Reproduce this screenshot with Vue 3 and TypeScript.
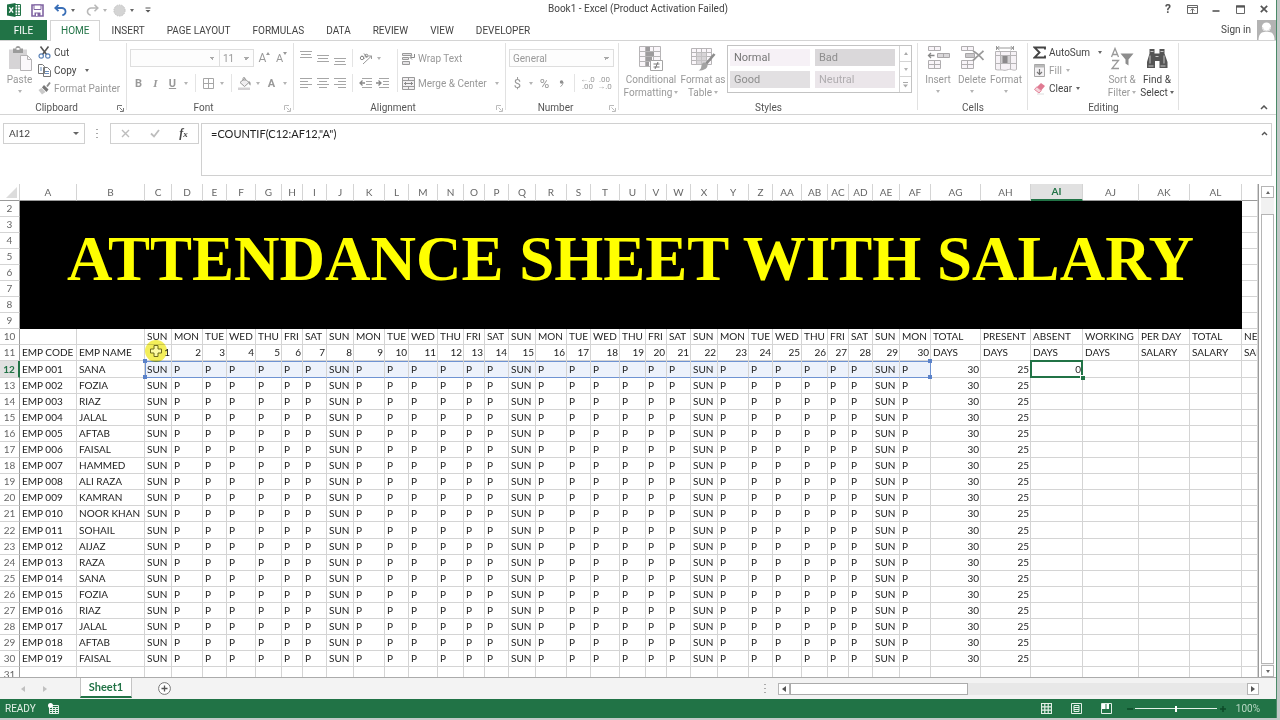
<script setup lang="ts">
import { ref } from 'vue'

interface Column { name: string; width: number; day: string; label: string }

const weekDays: string[] = ['SUN', 'MON', 'TUE', 'WED', 'THU', 'FRI', 'SAT']
const weekWidths: number[] = [27, 31, 24, 29, 26, 21, 24]

const columnName = (index: number): string =>
  index < 26 ? String.fromCharCode(65 + index) : 'A' + String.fromCharCode(65 + index - 26)

const dayColumns: Column[] = Array.from({ length: 30 }, (_, i) => ({
  name: columnName(i + 2),
  width: weekWidths[i % 7],
  day: weekDays[i % 7],
  label: String(i + 1),
}))

const totals: Column[] = [
  { name: 'AG', width: 50, day: 'TOTAL', label: 'DAYS' },
  { name: 'AH', width: 50, day: 'PRESENT', label: 'DAYS' },
  { name: 'AI', width: 52, day: 'ABSENT', label: 'DAYS' },
  { name: 'AJ', width: 56, day: 'WORKING', label: 'DAYS' },
  { name: 'AK', width: 51, day: 'PER DAY', label: 'SALARY' },
  { name: 'AL', width: 52, day: 'TOTAL', label: 'SALARY' },
]

const columns: Column[] = [
  { name: 'A', width: 57, day: '', label: 'EMP CODE' },
  { name: 'B', width: 68, day: '', label: 'EMP NAME' },
  ...dayColumns,
  ...totals,
]

const names: string[] = [
  'SANA', 'FOZIA', 'RIAZ', 'JALAL', 'AFTAB', 'FAISAL', 'HAMMED', 'ALI RAZA', 'KAMRAN', 'NOOR KHAN',
  'SOHAIL', 'AIJAZ', 'RAZA', 'SANA', 'FOZIA', 'RIAZ', 'JALAL', 'AFTAB', 'FAISAL',
]

const employees = names.map((name, i) => ({
  row: i + 12,
  code: 'EMP ' + String(i + 1).padStart(3, '0'),
  name,
}))

const tabs: string[] = ['HOME', 'INSERT', 'PAGE LAYOUT', 'FORMULAS', 'DATA', 'REVIEW', 'VIEW', 'DEVELOPER']
const activeTab = ref('HOME')
const cellName = ref('AI12')
const formula = ref('=COUNTIF(C12:AF12,"A")')
const zoom = ref(50)
</script>

<template>
  <div class="desktop">
    <div class="window">
      <header class="titlebar">
        <div class="qat">
          <svg class="logo" width="14" height="14" viewBox="0 0 14 14"><path d="M7 1.5h6.5v11H7z" fill="#fff" stroke="#217346" /><path d="M8 4h5M8 7h5M8 10h5M10.5 2v10" stroke="#217346" stroke-width=".8" /><path d="M0 1.5 8.500 0v14L0 12.500z" fill="#1e7145" /><path d="m2.300 4.300 3.800 5.400M6.100 4.300 2.300 9.700" stroke="#fff" stroke-width="1.400" /></svg>
          <button aria-label="Save"><svg width="13" height="13" viewBox="0 0 13 13"><path d="M1 1h11v11H1z" fill="#fff" stroke="#8064a2" stroke-width="1.600" /><path d="M3 1h7v4.500H3z" fill="#fff" stroke="#8064a2" /><path d="M3.500 8.500h6V12h-6z" fill="#8064a2" /><path d="M5 9.500h1.500V12H5z" fill="#fff" /></svg></button>
          <button aria-label="Undo"><svg width="13" height="12" viewBox="0 0 13 12"><path d="M4.500.8 1.200 4l3.300 3.200M1.500 4h6a3.600 3.600 0 0 1 .8 7.200" fill="none" stroke="#3a6fb7" stroke-width="1.800" /></svg></button>
          <button class="dd" aria-label="Undo list"><i class="caret dark"></i></button>
          <button aria-label="Redo"><svg width="13" height="12" viewBox="0 0 13 12"><path d="m8.500.8 3.300 3.200-3.300 3.200M11.500 4h-6a3.600 3.600 0 0 0-.8 7.200" fill="none" stroke="#b8b8b8" stroke-width="1.600" /></svg></button>
          <button class="dd" aria-label="Redo list"><i class="caret"></i></button>
          <button class="touch" aria-label="Touch mode"><svg width="13" height="13" viewBox="0 0 13 13"><circle cx="6.500" cy="6.500" r="5.600" fill="#d4d4d4" stroke="#c0c0c0" stroke-dasharray="1.500 1" /></svg></button>
          <button class="dd" aria-label="Mode list"><i class="caret dark"></i></button>
          <button class="customize" aria-label="Customize Quick Access Toolbar"><svg width="6" height="6" viewBox="0 0 6 6"><path d="M.5 1h5" stroke="#555" /><path d="M.5 3h5L3 5.500z" fill="#555" /></svg></button>
        </div>
        <div class="title">Book1 - Excel (Product Activation Failed)</div>
        <div class="controls">
          <button class="help" aria-label="Help">?</button>
          <button aria-label="Ribbon display options"><svg width="11" height="9" viewBox="0 0 11 9"><path d="M.5.5h10v8H.5zM.5 2.500h10M5.500 8V4M3.700 5.500l1.800-1.800 1.800 1.800" fill="none" stroke="#666" /></svg></button>
          <button aria-label="Minimize"><svg width="8" height="8" viewBox="0 0 8 8"><path d="M.5 6h7" stroke="#555" stroke-width="1.600" /></svg></button>
          <button aria-label="Maximize"><svg width="9" height="9" viewBox="0 0 9 9"><path d="M.5 1h8v7.500h-8z" fill="none" stroke="#666" /><path d="M0 1.500h9" stroke="#555" stroke-width="2.200" /></svg></button>
          <button aria-label="Close"><svg width="8" height="8" viewBox="0 0 8 8"><path d="m.8.8 6.400 6.400M7.200.8.8 7.200" stroke="#555" stroke-width="1.700" /></svg></button>
        </div>
      </header>

      <nav class="tabs">
        <button class="file">FILE</button>
        <button v-for="t in tabs" :key="t" class="tab" :class="{ open: t === activeTab }" @click="activeTab = t">{{ t }}</button>
        <a class="signin" href="#">Sign in</a>
        <svg class="avatar" width="19" height="20" viewBox="0 0 19 20"><path d="M0 0h19v20H0z" fill="#b3b3b3" /><circle cx="9.500" cy="7" r="4.600" fill="#fff" /><path d="M1.500 20c0-5 2.500-8 5.500-8h5c3 0 5.500 3 5.500 8z" fill="#fff" /><path d="M5.500 7a4 4 0 0 0 8 0" fill="none" stroke="#b3b3b3" stroke-width=".5" /></svg>
      </nav>

      <section class="ribbon" aria-label="Home ribbon">
        <div class="group clipboard">
          <div class="body">
            <button class="big off paste">
              <svg width="24" height="26" viewBox="0 0 24 26"><path d="M1 3.500h18V23H1z" fill="#d6d4d6" /><path d="M5 2.500h2.500a2.500 2.500 0 0 1 5 0H15V7H5z" fill="#9c9c9c" /><path d="M8.500 2h3v1.800h-3z" fill="#fff" /><path d="M12.500 9.500h7l4 4v11h-11z" fill="#fbf8fb" stroke="#b5b3b5" /><path d="M19.500 9.500v4h4" fill="none" stroke="#b5b3b5" /></svg>
              <span>Paste</span><i class="caret"></i>
            </button>
            <div class="stack">
              <button class="row"><svg width="13" height="13" viewBox="0 0 13 13"><path d="m2.500.5 6 8M10.500.5l-6 8" stroke="#555" stroke-width="1.600" /><circle cx="3.200" cy="10" r="2.200" fill="none" stroke="#5b83b8" stroke-width="1.200" /><circle cx="9.800" cy="10" r="2.200" fill="none" stroke="#5b83b8" stroke-width="1.200" /></svg>Cut</button>
              <button class="row"><svg width="13" height="13" viewBox="0 0 13 13"><path d="M.5.5h4l2 2v7h-6zM5.500 3.500h4l3 3v6h-7z" fill="#fff" stroke="#777" /><path d="M2 4h2M2 6h2M7 7.500h4M7 9.500h4" stroke="#6d8fbd" /></svg>Copy<i class="caret dark far"></i></button>
              <button class="row off"><svg width="13" height="13" viewBox="0 0 13 13"><path d="m6 3 4.500 4.500-2 2.500L4 5.500z" fill="#777" /><path d="m3.500 6 4 4-3.500 2.500L.5 8z" fill="#c9c9c9" /><path d="m9 4.500 3-4" stroke="#8a8a8a" stroke-width="1.800" /></svg>Format Painter</button>
            </div>
          </div>
          <div class="caption">Clipboard<button class="launch" aria-label="Clipboard settings"><svg width="7" height="7" viewBox="0 0 7 7"><path d="M.5 5V.5H5M2.500 2.500l3 3M6.500 3v3.500H3" fill="none" stroke="#777" /></svg></button></div>
        </div>

        <div class="group font">
          <div class="body lines">
            <div class="line">
              <select class="family off" aria-label="Font"><option></option></select>
              <select class="size off" aria-label="Font size"><option>11</option></select>
              <button class="ic grow off" aria-label="Increase font size">A<svg width="4" height="3" viewBox="0 0 4 3"><path d="M0 3h4L2 0z" fill="#999" /></svg></button>
              <button class="ic shrink off" aria-label="Decrease font size">A<svg width="4" height="3" viewBox="0 0 4 3"><path d="M0 0h4L2 3z" fill="#999" /></svg></button>
            </div>
            <div class="line">
              <button class="ic off bold" aria-label="Bold">B</button>
              <button class="ic off italic" aria-label="Italic">I</button>
              <button class="ic off under" aria-label="Underline">U</button>
              <button class="dd" aria-label="Underline styles"><i class="caret"></i></button>
              <i class="sep"></i>
              <button class="ic" aria-label="Borders"><svg width="11" height="11" viewBox="0 0 11 11"><path d="M.5.500h10v10H.5zM5.500.5v10M.5 5.500h10" fill="none" stroke="#a6a6a6" /></svg></button>
              <button class="dd" aria-label="Border styles"><i class="caret"></i></button>
              <i class="sep"></i>
              <button class="ic" aria-label="Fill color"><svg width="14" height="13" viewBox="0 0 14 13"><path d="m2 5.500 4.500-4L11 5.500l-4.500 4z" fill="#f0eef0" stroke="#999" /><path d="M5 4V1.500a1 1 0 0 1 2 0V4" fill="none" stroke="#999" /><path d="M10.500 4c2 .5 2.500 2 2 4.500-1.500-.5-1.500-2-2-4.500z" fill="#999" /><path d="M0 10.500h12V13H0z" fill="#d3d1d3" /></svg></button>
              <button class="dd" aria-label="Fill colors"><i class="caret"></i></button>
              <button class="ic off bold" aria-label="Font color">A</button>
              <button class="dd" aria-label="Font colors"><i class="caret"></i></button>
            </div>
          </div>
          <div class="caption">Font<button class="launch" aria-label="Font settings"><svg width="7" height="7" viewBox="0 0 7 7"><path d="M.5 5V.5H5M2.500 2.500l3 3M6.500 3v3.500H3" fill="none" stroke="#bbb" /></svg></button></div>
        </div>

        <div class="group alignment">
          <div class="body">
            <div class="lines left">
              <div class="line">
                <button class="ic" aria-label="Top align"><svg width="12" height="14" viewBox="0 0 12 14"><path d="M0 .5h12M1 3.500h10M0 6.500h12" stroke="#a6a6a6" /></svg></button>
                <button class="ic" aria-label="Middle align"><svg width="12" height="14" viewBox="0 0 12 14"><path d="M0 4.500h12M1 7.500h10M0 10.500h12" stroke="#a6a6a6" /></svg></button>
                <button class="ic" aria-label="Bottom align"><svg width="12" height="14" viewBox="0 0 12 14"><path d="M0 7.500h12M1 10.500h10M0 13.500h12" stroke="#a6a6a6" /></svg></button>
                <i class="sep"></i>
                <button class="ic" aria-label="Orientation"><svg width="14" height="13" viewBox="0 0 14 13"><circle cx="3" cy="6" r="1.700" fill="none" stroke="#888" /><path d="M3 3.500 5.500 6.500M5 1.500l3 3.500" stroke="#888" /><circle cx="7.500" cy="3.800" r="1.500" fill="none" stroke="#888" /><path d="M4 12 12.500 4M9.500 4h3v3" fill="none" stroke="#999" /></svg></button>
                <button class="dd" aria-label="Orientation list"><i class="caret"></i></button>
              </div>
              <div class="line">
                <button class="ic" aria-label="Align left"><svg width="12" height="10" viewBox="0 0 12 10"><path d="M0 .5h12M0 3.500h8M0 6.500h12M0 9.500h8" stroke="#a6a6a6" /></svg></button>
                <button class="ic" aria-label="Center"><svg width="12" height="10" viewBox="0 0 12 10"><path d="M0 .5h12M2 3.500h8M0 6.500h12M2 9.500h8" stroke="#a6a6a6" /></svg></button>
                <button class="ic" aria-label="Align right"><svg width="12" height="10" viewBox="0 0 12 10"><path d="M0 .5h12M4 3.500h8M0 6.500h12M4 9.500h8" stroke="#a6a6a6" /></svg></button>
                <i class="sep"></i>
                <button class="ic" aria-label="Decrease indent"><svg width="13" height="10" viewBox="0 0 13 10"><path d="M3 .5h10M7 3.500h6M7 6.500h6M3 9.500h10" stroke="#a6a6a6" /><path d="M6 5H1M3.500 2.500 1 5l2.500 2.500" fill="none" stroke="#888" stroke-width="1.300" /></svg></button>
                <button class="ic" aria-label="Increase indent"><svg width="13" height="10" viewBox="0 0 13 10"><path d="M3 .5h10M7 3.500h6M7 6.500h6M3 9.500h10" stroke="#a6a6a6" /><path d="M0 5h5M2.500 2.500 5 5 2.500 7.500" fill="none" stroke="#888" stroke-width="1.300" /></svg></button>
              </div>
            </div>
            <div class="lines right">
              <button class="row off"><svg width="13" height="13" viewBox="0 0 13 13"><path d="M.5 1.500h9v2h-9zM.5 5.500h6v2h-6zM.5 9.500h7v3h-7z" fill="#e4e2e4" stroke="#999" /><path d="M12.500 2v3.500h-4M10 3.500l-2 2 2 2" fill="none" stroke="#888" /></svg>Wrap Text</button>
              <button class="row off"><svg width="13" height="13" viewBox="0 0 13 13"><path d="M.5.500h12v12H.5zM.5 3.500h12M.5 9.500h12M6.500.5v3M6.500 9.500v3" fill="#f1eff1" stroke="#999" /><path d="M2 6.500h9M4 5 2.500 6.500 4 8M9 5l1.500 1.500L9 8" fill="none" stroke="#888" /></svg>Merge &amp; Center<i class="caret far"></i></button>
            </div>
          </div>
          <div class="caption">Alignment<button class="launch" aria-label="Alignment settings"><svg width="7" height="7" viewBox="0 0 7 7"><path d="M.5 5V.5H5M2.500 2.500l3 3M6.500 3v3.500H3" fill="none" stroke="#bbb" /></svg></button></div>
        </div>

        <div class="group number">
          <div class="body lines">
            <div class="line"><select class="format off" aria-label="Number format"><option>General</option></select></div>
            <div class="line">
              <button class="ic off sym" aria-label="Accounting format">$</button>
              <button class="dd" aria-label="Currencies"><i class="caret"></i></button>
              <button class="ic off sym" aria-label="Percent style">%</button>
              <button class="ic off" aria-label="Comma style"><svg width="5" height="7" viewBox="0 0 5 7"><circle cx="2.500" cy="2" r="1.700" fill="#8f8f8f" /><path d="M4 2c0 2-.8 3.500-2.500 4.500" fill="none" stroke="#8f8f8f" /></svg></button>
              <i class="sep"></i>
              <button class="ic off dec" aria-label="Increase decimal"><span>←.0</span><span>.00</span></button>
              <button class="ic off dec" aria-label="Decrease decimal"><span>.00</span><span>→.0</span></button>
            </div>
          </div>
          <div class="caption">Number<button class="launch" aria-label="Number settings"><svg width="7" height="7" viewBox="0 0 7 7"><path d="M.5 5V.5H5M2.500 2.500l3 3M6.500 3v3.500H3" fill="none" stroke="#bbb" /></svg></button></div>
        </div>

        <div class="group styles">
          <div class="body">
            <button class="big off cond">
              <svg width="24" height="26" viewBox="0 0 24 26"><path d="M.5.500h21v20H.5zM.5 5.500h21M.5 10.500h21M.5 15.500h21M6.500.5v20M14.500.5v20" fill="#faf6fa" stroke="#b7b5b7" /><path d="M7 1h4v4H7zM7 6h8v4H7zM7 11h6v4H7zM7 16h3v4H7z" fill="#9d9b9d" /><path d="M11.500 14.500h12v10h-12z" fill="#fff" stroke="#a5a5a5" /><path d="M14.500 18h6M14.500 21h6M19 16l-3 7" stroke="#777" /></svg>
              <span>Conditional</span><span>Formatting<i class="caret"></i></span>
            </button>
            <button class="big off fmt">
              <svg width="26" height="26" viewBox="0 0 26 26"><path d="M1.500 2.500h20v16h-20zM1.500 6.500h20M1.500 10.500h20M1.500 14.500h20M6.500 2.500v16M11.500 2.500v16M16.500 2.500v16" fill="#faf6fa" stroke="#b7b5b7" /><path d="M6.500 6.500h10v12h-10z" fill="#c9c7c9" opacity=".7" /><path d="M24.500 8 16 18" stroke="#8d8d8d" stroke-width="2.600" /><path d="M14 16.500c2.500 0 4 1.500 3.500 3.500-.8 3-4.500 4.800-9 4.500 3-1.500 2.500-3 3-5 .3-1.500 1-3 2.500-3z" fill="#a3a3a3" /></svg>
              <span>Format as</span><span>Table<i class="caret"></i></span>
            </button>
            <div class="gallery">
              <div class="swatches">
                <button class="sw normal">Normal</button><button class="sw bad">Bad</button>
                <button class="sw good">Good</button><button class="sw neutral">Neutral</button>
              </div>
              <div class="arrows">
                <button aria-label="Previous styles"><i class="caret up"></i></button>
                <button aria-label="Next styles"><i class="caret"></i></button>
                <button aria-label="More styles"><svg width="5" height="6" viewBox="0 0 5 6"><path d="M0 .5h5" stroke="#aaa" /><path d="M0 2.500h5L2.500 5.500z" fill="#aaa" /></svg></button>
              </div>
            </div>
          </div>
          <div class="caption">Styles</div>
        </div>

        <div class="group cells">
          <div class="body">
            <button class="big off cell">
              <svg width="24" height="26" viewBox="0 0 24 26"><path d="M2.500.5h12v4h-12zM8.500.5v4M2.500 14.500h12v8h-12zM2.500 18.500h12M8.500 14.500v8" fill="#f8f4f8" stroke="#b0aeb0" /><path d="M11.500 7.500h12v4h-12zM17.500 7.500v4" fill="#d9d7d9" stroke="#a9a7a9" /><path d="M8.500 9.500h-6M5 7 2.500 9.500 5 12" fill="none" stroke="#888" stroke-width="1.300" /></svg>
              <span>Insert</span><i class="caret"></i>
            </button>
            <button class="big off cell">
              <svg width="24" height="26" viewBox="0 0 24 26"><path d="M1.500.5h12v4h-12zM7.500.5v4M1.500 14.500h12v8h-12zM1.500 18.500h12M7.500 14.500v8" fill="#f8f4f8" stroke="#b0aeb0" /><path d="M5.500 7.500h9v4h-9z" fill="#c9c7c9" stroke="#a9a7a9" /><path d="M13 5c4 2 7 5 10.500 9M23.500 5C20 8 17 10.500 13 14.500" fill="none" stroke="#999" stroke-width="1.800" /></svg>
              <span>Delete</span><i class="caret"></i>
            </button>
            <button class="big off cell">
              <svg width="24" height="26" viewBox="0 0 24 26"><path d="M3 2h16M5.500 0 3 2l2.500 2M16.500 0 19 2l-2.500 2M2.500 0v4M19.500 0v4" fill="none" stroke="#999" /><path d="M1.500 5.500h21v18c-3 2-5-1-8 0s-4 1-6 .5-4 .5-7-.5zM1.500 9.500h21M1.500 17.500h21M6.500 5.500v18M16.500 5.500v18" fill="#f6f2f6" stroke="#b7b5b7" /><path d="M7 10h9v7H7z" fill="#d0ced0" /><path d="M8.500 10h5v7h-5z" fill="#8b898b" /></svg>
              <span>Format</span><i class="caret"></i>
            </button>
          </div>
          <div class="caption">Cells</div>
        </div>

        <div class="group editing">
          <div class="body">
            <div class="stack">
              <button class="row"><svg width="13" height="13" viewBox="0 0 13 13"><path d="M12 3.500V1.500H1.500l5 5-5 5H12v-2" fill="none" stroke="#444" stroke-width="1.900" /></svg>AutoSum<i class="caret dark far"></i></button>
              <button class="row off"><svg width="13" height="13" viewBox="0 0 13 13"><path d="M1.500.500h10v12h-10z" fill="#f3f1f3" stroke="#a6a6a6" /><path d="M1.500 1h10v2.500h-10z" fill="#b9b9b9" /><path d="M6.500 5v5.500M4 8l2.500 2.500L9 8" fill="none" stroke="#777" stroke-width="1.200" /></svg>Fill<i class="caret"></i></button>
              <button class="row"><svg width="13" height="13" viewBox="0 0 13 13"><path d="m8 1 4 3-6 7-4.500-3.500z" fill="#e07a92" /><path d="m3.800 4.800 4.500 3.700-2.300 2.500-4.500-3.500z" fill="#f5d3da" stroke="#e07a92" stroke-width=".8" /><path d="M4 12h7" stroke="#ddd" /></svg>Clear<i class="caret dark"></i></button>
            </div>
            <button class="big off sort">
              <svg width="24" height="26" viewBox="0 0 24 26"><path d="M1.500 11 5 2.500 8.500 11M2.800 8.500h4.400M2 14.500h6.500L2 22.500h7" fill="none" stroke="#999" stroke-width="1.300" /><path d="M10.500 7.500h13l-5 6v6l-3-2v-4z" fill="#8d8d8d" /></svg>
              <span>Sort &amp;</span><span>Filter<i class="caret"></i></span>
            </button>
            <button class="big find">
              <svg width="24" height="26" viewBox="0 0 24 26"><path d="M4.500 3h5v4.500h5V3h5v4.500l3 8.500v6h-8v-7h-4.500v7h-8v-6l2.500-8.500z" fill="#555" /><path d="M5.500 5.500h3M15.500 5.500h3M3.500 20h5M15.500 20h5M5 9.500v8M19 9.500v8M10.500 10.500h3" stroke="#c4c4c4" /></svg>
              <span>Find &amp;</span><span>Select<i class="caret dark"></i></span>
            </button>
          </div>
          <div class="caption">Editing</div>
        </div>
        <button class="collapse" aria-label="Collapse the ribbon"><svg width="8" height="5" viewBox="0 0 8 5"><path d="m1 4 3-3 3 3" fill="none" stroke="#555" stroke-width="1.500" /></svg></button>
      </section>

      <section class="formulabar">
        <div class="namebox">
          <input v-model="cellName" aria-label="Name box" />
          <button aria-label="Names"><i class="caret dark wide"></i></button>
        </div>
        <span class="dots"></span>
        <div class="entry">
          <button aria-label="Cancel"><svg width="9" height="9" viewBox="0 0 9 9"><path d="m1 1 7 7M8 1 1 8" stroke="#bdbdbd" stroke-width="1.400" /></svg></button>
          <button aria-label="Enter"><svg width="10" height="9" viewBox="0 0 10 9"><path d="m1 4.500 3 3 5-6.500" fill="none" stroke="#bdbdbd" stroke-width="1.800" /></svg></button>
          <button class="fx" aria-label="Insert function">f<small>x</small></button>
        </div>
        <div class="formula">
          <textarea v-model="formula" aria-label="Formula"></textarea>
          <button aria-label="Collapse formula bar"><svg width="7" height="5" viewBox="0 0 7 5"><path d="m1 4 2.500-2.500L6 4" fill="none" stroke="#555" stroke-width="1.400" /></svg></button>
        </div>
      </section>

      <main class="workspace">
        <div class="sheet">
          <table>
            <colgroup>
              <col class="rowcol" />
              <col v-for="c in columns" :key="c.name" :style="{ width: c.width + 'px' }" />
              <col />
            </colgroup>
            <thead>
              <tr>
                <th class="corner"><svg width="11" height="11" viewBox="0 0 11 11"><path d="M11 0v11H0z" fill="#dcdcdc" /></svg></th>
                <th v-for="c in columns" :key="c.name" :class="{ current: c.name === 'AI' }">{{ c.name }}</th>
                <th></th>
              </tr>
            </thead>
            <tbody>
              <tr>
                <th>2</th>
                <td class="banner" :colspan="columns.length" rowspan="8">ATTENDANCE SHEET WITH SALARY</td>
                <td></td>
              </tr>
              <tr v-for="n in 7" :key="n"><th>{{ n + 2 }}</th><td></td></tr>
              <tr>
                <th>10</th>
                <td v-for="c in columns" :key="c.name">{{ c.day }}</td>
                <td>NET</td>
              </tr>
              <tr>
                <th>11</th>
                <td v-for="(c, i) in columns" :key="c.name" :class="{ num: i > 1 && i < 32 }">{{ c.label }}</td>
                <td>SALARY</td>
              </tr>
              <tr v-for="e in employees" :key="e.row" :class="{ tall: e.row === 12 || e.row === 22 }">
                <th :class="{ current: e.row === 12 }">{{ e.row }}</th>
                <td>{{ e.code }}</td>
                <td>{{ e.name }}</td>
                <td v-for="(d, i) in dayColumns" :key="d.name" :class="{ picked: e.row === 12, first: i === 0, last: i === 29 }">{{ d.day === 'SUN' ? 'SUN' : 'P' }}</td>
                <td class="num">30</td>
                <td class="num">25</td>
                <td class="num" :class="{ cursor: e.row === 12 }">{{ e.row === 12 ? '0' : '' }}</td>
                <td></td><td></td><td></td><td></td>
              </tr>
              <tr>
                <th>31</th>
                <td v-for="c in columns" :key="c.name"></td>
                <td></td>
              </tr>
            </tbody>
          </table>
          <svg class="pointer" width="22" height="22" viewBox="0 0 22 22"><circle cx="11" cy="11" r="11" fill="#f3ee5a" /><path d="M9 5.500h4V9h3.500v4H13v3.500H9V13H5.500V9H9z" fill="#fbf9a4" stroke="#6d6a1c" /></svg>
        </div>
        <div class="vscroll">
          <button aria-label="Scroll up"><i class="caret up dark"></i></button>
          <div class="vtrack"><div class="vthumb"></div></div>
          <button aria-label="Scroll down"><i class="caret dark"></i></button>
        </div>
      </main>

      <div class="sheetbar">
        <button class="nav" aria-label="Previous sheet"><svg width="4" height="6" viewBox="0 0 4 6"><path d="M4 0v6L0 3z" fill="#c0c0c0" /></svg></button>
        <button class="nav" aria-label="Next sheet"><svg width="4" height="6" viewBox="0 0 4 6"><path d="M0 0v6l4-3z" fill="#c0c0c0" /></svg></button>
        <button class="sheettab">Sheet1</button>
        <button class="add" aria-label="New sheet"><svg width="13" height="13" viewBox="0 0 13 13"><circle cx="6.500" cy="6.500" r="5.900" fill="#fff" stroke="#777" /><path d="M3.500 6.500h6M6.500 3.500v6" stroke="#555" stroke-width="1.300" /></svg></button>
        <span class="dots"></span>
        <div class="hscroll">
          <button aria-label="Scroll left"><svg width="4" height="6" viewBox="0 0 4 6"><path d="M4 0v6L0 3z" fill="#555" /></svg></button>
          <div class="htrack"><div class="hthumb"></div></div>
          <button aria-label="Scroll right"><svg width="4" height="6" viewBox="0 0 4 6"><path d="M0 0v6l4-3z" fill="#555" /></svg></button>
        </div>
      </div>

      <footer class="status">
        <span>READY</span>
        <button class="macro" aria-label="Record macro"><svg width="11" height="11" viewBox="0 0 11 11"><path d="M1.500 2.500h9v8h-9z" fill="none" stroke="#e4f0e8" /><path d="M4 4.500h6M2 6.500h8M2 8.500h8M4.500 4v6M7.500 4v6" stroke="#e4f0e8" /><circle cx="2.500" cy="2.500" r="2.500" fill="#fff" /></svg></button>
        <span class="space"></span>
        <button class="view" aria-label="Normal view"><svg width="11" height="11" viewBox="0 0 11 11"><path d="M.5.500h10v10H.5zM3.800.5v10M7.200.5v10M.5 3.800h10M.5 7.200h10" fill="none" stroke="#e4f0e8" stroke-width="1.200" /></svg></button>
        <button class="view" aria-label="Page layout view"><svg width="11" height="11" viewBox="0 0 11 11"><path d="M.5.500h10v10H.5zM3 2.500h5v6H3zM3 4.500h5M3 6.500h5" fill="none" stroke="#e4f0e8" /></svg></button>
        <button class="view" aria-label="Page break preview"><svg width="11" height="11" viewBox="0 0 11 11"><path d="M.5.500h10v10H.5z" fill="none" stroke="#e4f0e8" /><path d="M1 1h3.500v5H1zM5.500 1H8v5H5.500z" fill="#fff" /></svg></button>
        <button class="step" aria-label="Zoom out"><svg width="6" height="6" viewBox="0 0 6 6"><path d="M0 3h6" stroke="#0d4a28" stroke-width="1.500" /></svg></button>
        <input v-model="zoom" class="zoom" type="range" min="0" max="100" aria-label="Zoom" />
        <button class="step" aria-label="Zoom in"><svg width="6" height="6" viewBox="0 0 6 6"><path d="M0 3h6M3 0v6" stroke="#0d4a28" stroke-width="1.500" /></svg></button>
        <span class="percent">100%</span>
      </footer>
    </div>
  </div>
</template>

<style>
html, body, #app { height: 100%; }
body { margin: 0; overflow: hidden; }
</style>

<style scoped>
.desktop {
  height: 100vh;
  box-sizing: border-box;
  padding: 0 3px 2px 0;
  background: #c3c9c8;
  font-family: Roboto, "Open Sans", sans-serif;
  font-size: 10px;
  line-height: 13px;
  color: #444;
}
.desktop *, .desktop *::before, .desktop *::after { box-sizing: border-box; }
.window {
  height: 100%;
  display: flex;
  flex-direction: column;
  background: #fff;
  border-right: 1px solid #4a8a68;
}
button, input, select, textarea { font: inherit; color: inherit; margin: 0; padding: 0; border: 0; background: none; border-radius: 0; outline: 0; }
button { display: flex; align-items: center; justify-content: center; white-space: nowrap; }
svg { display: block; flex: none; }
.caret { flex: none; width: 0; height: 0; border: 2px solid transparent; border-top: 3px solid #b4b4b4; border-bottom: 0; }
.caret.dark { border-top-color: #666; }
.caret.wide { border-left-width: 3px; border-right-width: 3px; }
.caret.up { border-top: 0; border-bottom: 3px solid #aaa; }
.caret.up.dark { border-bottom-color: #666; }

.titlebar { height: 20px; flex: none; display: grid; grid-template-columns: 1fr auto 1fr; align-items: center; }
.qat { display: flex; align-items: center; height: 18px; padding-left: 7px; }
.qat .logo { margin-right: 9px; }
.qat button { width: 15px; height: 18px; }
.qat button + button { margin-left: 8px; }
.qat .dd.dd { width: 9px; margin-left: 0; }
.qat .touch.touch { margin-left: 3px; }
.qat .customize.customize { margin-left: 4px; }
.title { line-height: 18px; padding-bottom: 2px; }
.controls { display: flex; justify-content: flex-end; padding: 0 4px 2px 0; }
.controls button { width: 16px; height: 18px; margin-left: 8px; }
.controls .help { font-size: 12px; font-weight: 700; color: #555; }

.tabs { height: 21px; flex: none; display: flex; border-bottom: 1px solid #d4d4d4; }
.file { width: 47px; background: #217346; color: #fff; }
.tab { padding: 0 10px 1px; height: 21px; border: 1px solid transparent; border-bottom: 0; }
.file + .tab { margin-left: 3px; }
.tab.open { color: #217346; border-color: #d4d4d4; background: #fff; }
.signin { margin-left: auto; margin-right: 6px; color: #444; text-decoration: none; line-height: 20px; }

.ribbon { height: 74px; flex: none; display: flex; border-bottom: 1px solid #d4d4d4; }
.group { display: flex; flex-direction: column; position: relative; flex: none; padding-left: 3px; }
.group::after { content: ""; position: absolute; right: 0; top: 2px; bottom: 4px; width: 1px; background: #e1e1e1; }
.clipboard { width: 127px; }
.font { width: 167px; }
.alignment { width: 212px; }
.number { width: 113px; }
.styles { width: 299px; }
.cells { width: 110px; }
.editing { width: 151px; }
.body { flex: 1; display: flex; min-height: 0; align-items: flex-start; }
.caption { height: 14px; line-height: 15px; text-align: center; color: #555; position: relative; margin-left: -3px; }
.clipboard .caption, .font .caption, .alignment .caption, .number .caption { padding-right: 14px; }
.launch { position: absolute; right: 3px; top: 5px; }
.stack { padding-top: 2px; }
.stack .row { height: 18px; }
.row { gap: 3px; color: #444; }
.row .caret { margin-left: 1px; }
.row .caret.far { margin-left: 5px; }
.off, .row.off { color: #999; }
.big { flex-direction: column; justify-content: flex-start; padding-top: 5px; height: 60px; }
.big span { display: flex; align-items: center; gap: 2px; }
.big span:first-of-type { margin-top: 1px; }
.big > .caret { margin-top: 4px; }
.paste { width: 33px; margin-right: 2px; }
.cond { width: 58px; }
.fmt { width: 46px; }
.cell { width: 34px; }
.sort { width: 36px; }
.find { width: 34px; }
.editing .stack { width: 73px; padding-left: 2px; }

.lines { display: flex; flex-direction: column; align-items: flex-start; gap: 7px; padding-top: 8px; }
.line, .right .row { display: flex; align-items: center; height: 18px; }
.line select { height: 18px; border: 1px solid #dedede; appearance: none; background: #fdfdfd conic-gradient(from -45deg at 50% 100%, #aaa 90deg, transparent 0) no-repeat right 4px center / 6px 3px; padding-left: 3px; color: #999; font-size: 10px; }
.family { width: 90px; }
.line .size { width: 34px; border-left: 0; }
.format { width: 105px; }
.ic { width: 17px; height: 18px; font-size: 11px; }
.grow { margin-left: 2px; font-size: 12px; }
.grow svg, .shrink svg { align-self: flex-start; margin-top: 3px; }
.dd { width: 10px; height: 18px; }
.bold { font-weight: 700; }
.italic { font-family: "Liberation Serif", serif; font-style: italic; font-weight: 700; }
.under { text-decoration: underline; font-weight: 700; }
.sym { font-size: 13px; }
.dec { flex-direction: column; font-size: 8px; line-height: 7px; }
.sep { width: 1px; height: 18px; margin: 0 4px; background: #e4e4e4; }
.left { width: 101px; position: relative; }
.left::after { content: ""; position: absolute; right: 0; top: 8px; bottom: 0; width: 1px; background: #e4e4e4; }
.right { padding-left: 4px; }

.gallery { margin: 4px 0 0 1px; width: 185px; height: 48px; display: flex; border: 1px solid #c3c3c3; }
.swatches { flex: 1; display: grid; grid-template-columns: 80px 80px; grid-template-rows: 17px 17px; gap: 5px; padding: 3px 2px; }
.sw { justify-content: flex-start; padding-left: 4px; font-size: 11px; }
.normal { background: #f6f1f6; color: #777; }
.bad { background: #dad8da; color: #8d8d8d; }
.good { background: #e2e0e2; color: #8d8d8d; }
.neutral { background: #ebe6ea; color: #b0adb0; }
.arrows { width: 12px; display: flex; flex-direction: column; border-left: 1px solid #d4d4d4; }
.arrows button { flex: 1; }
.arrows button + button { border-top: 1px solid #d4d4d4; }
.collapse { margin: auto 8px 4px auto; }

.formulabar { height: 69px; flex: none; display: flex; align-items: flex-start; padding: 8px 4px 0 3px; font-family: Lato, sans-serif; }
.namebox { display: flex; width: 82px; height: 21px; border: 1px solid #d0d0d0; }
.namebox input { flex: 1; min-width: 0; padding-left: 5px; font-size: 10px; }
.namebox button { width: 16px; }
.dots { width: 2px; height: 9px; background: repeating-linear-gradient(#aaa 0 1px, transparent 1px 4px); }
.formulabar .dots { margin: 6px 12px 0 11px; }
.entry { display: flex; width: 89px; height: 21px; border: 1px solid #d0d0d0; margin-right: 3px; }
.entry button { flex: 1; }
.fx { font: italic 700 12px "Liberation Serif", serif; }
.fx small { font-size: 9px; }
.formula { flex: 1; height: 53px; display: flex; align-items: flex-start; border: 1px solid #d0d0d0; margin-left: -1px; }
.formula textarea { flex: 1; height: 50px; resize: none; padding: 2px 9px; font-size: 11px; line-height: 15px; color: #222; }
.formula button { width: 14px; height: 18px; }

.workspace { flex: 1; min-height: 0; display: flex; }
.sheet { flex: 1; min-width: 0; overflow: hidden; position: relative; border-right: 1px solid #9a9a9a; }
table { width: 100%; table-layout: fixed; border-collapse: separate; border-spacing: 0; font-family: Lato, sans-serif; font-size: 10px; line-height: 15px; color: #222; }
.rowcol { width: 20px; }
th, td { padding: 0 0 0 2px; height: 16px; text-align: left; font-weight: 400; white-space: nowrap; overflow: hidden; border: solid #d4d4d4; border-width: 0 1px 1px 0; }
.tall td, .tall th { height: 17px; }
th { padding: 0; text-align: center; color: #666; }
thead th { height: 17px; border-bottom-color: #9a9a9a; }
tbody th { border-right-color: #9a9a9a; }
thead .current { background: #e1e1e1; color: #217346; font-weight: 700; border-bottom: 2px solid #217346; }
tbody .current { background: #e1e1e1; color: #217346; font-weight: 700; border-right: 2px solid #217346; }
.corner svg { margin-left: auto; margin-right: 2px; }
.num { text-align: right; padding-right: 1px; }
.banner { background: #000; color: #ff0; font: 700 63px/72px "Liberation Serif", serif; text-align: center; padding: 0 0 12px; border-color: #000; }
.picked { background: #edf2fb; box-shadow: inset 0 1px #6f93d2; border-bottom-color: #6f93d2; position: relative; overflow: visible; }
.picked.first { box-shadow: inset 1px 1px #6f93d2; }
.picked.last { border-right-color: #6f93d2; }
.picked.first::before, .picked.first::after, .picked.last::before, .picked.last::after { content: ""; position: absolute; width: 4px; height: 4px; background: #5b82c9; }
.picked.first::before { left: -2px; top: -2px; }
.picked.first::after { left: -2px; bottom: -2px; }
.picked.last::before { right: -2px; top: -2px; }
.picked.last::after { right: -2px; bottom: -2px; }
.cursor { position: relative; overflow: visible; }
.cursor::before { content: ""; position: absolute; inset: -1px -1px -1px -1px; border: 2px solid #217346; }
.cursor::after { content: ""; position: absolute; right: -3px; bottom: -3px; width: 5px; height: 5px; background: #217346; border: solid #fff; border-width: 1px 0 0 1px; }
.pointer { position: absolute; left: 145px; top: 156px; mix-blend-mode: multiply; }

.vscroll { width: 17px; display: flex; flex-direction: column; padding: 2px 2px 0; }
.vscroll button { height: 12px; border: 1px solid #b5b5b5; background: #fff; }
.vtrack { flex: 1; background: #f1f1f1; padding: 16px 0 1px; display: flex; }
.vthumb { flex: 1; background: #fff; border: 1px solid #b5b5b5; }

.sheetbar { height: 22px; flex: none; display: flex; align-items: center; background: #f3f3f3; border-top: 1px solid #ababab; }
.nav { width: 22px; height: 21px; }
.nav:first-child { margin-left: 12px; }
.sheettab { width: 52px; height: 20px; margin-left: 24px; align-self: flex-start; background: #fff; border: solid #c4c4c4; border-width: 0 1px; border-bottom: 2px solid #217346; color: #217346; font: 700 11px/18px Lato, sans-serif; }
.add { margin-left: 26px; }
.sheetbar .dots { margin-left: auto; margin-right: 12px; }
.hscroll { width: 481px; display: flex; height: 12px; margin-right: 17px; }
.hscroll button { width: 12px; border: 1px solid #b5b5b5; background: #fff; }
.htrack { flex: 1; background: #e8e8e8; }
.hthumb { width: 39%; height: 12px; background: #fff; border: 1px solid #ababab; }

.status { height: 19px; flex: none; display: flex; align-items: center; background: #217346; color: #e4f0e8; padding: 0 16px 0 5px; }
.macro { margin-left: 12px; }
.space { flex: 1; }
.view { width: 30px; }
.step { width: 8px; margin-left: 4px; }
.step + .zoom { margin-left: 1px; }
.zoom { width: 82px; height: 12px; appearance: none; background: linear-gradient(#e4f0e8, #e4f0e8) no-repeat center / 100% 1px; }
.zoom::-webkit-slider-thumb { appearance: none; width: 2px; height: 6px; background: #fff; }
.zoom + .step { margin-left: 2px; }
.percent { margin-left: 9px; color: #b8d8c4; }
</style>
